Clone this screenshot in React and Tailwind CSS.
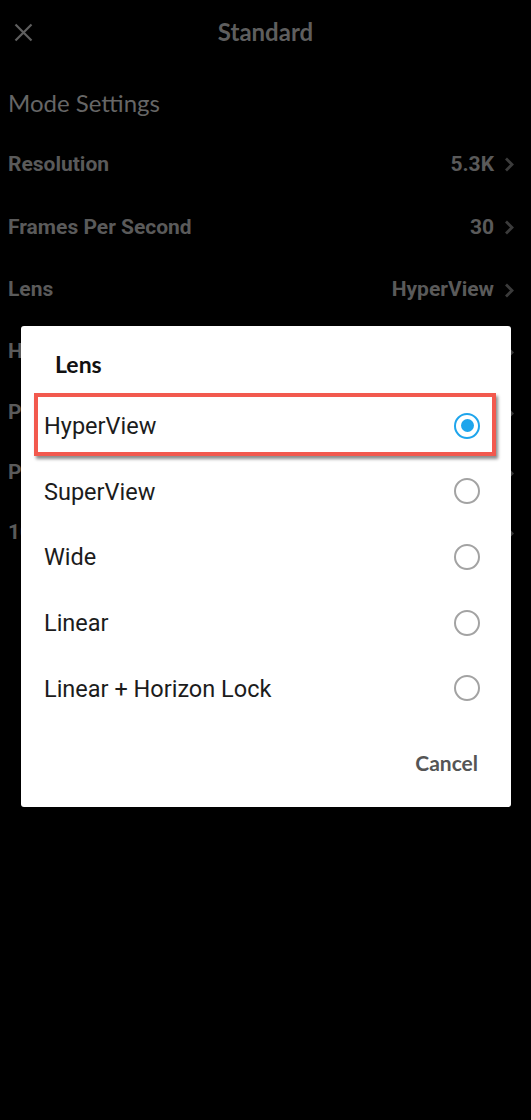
import React from 'react';

const settings = [
  { label: 'Resolution', value: '5.3K', h: 'h-[63px]' },
  { label: 'Frames Per Second', value: '30', h: 'h-[63px]' },
  { label: 'Lens', value: 'HyperView', h: 'h-[62px]' },
  { label: 'HyperSmooth', value: 'On', h: 'h-[62px]' },
  { label: 'Protune', value: 'Off', h: 'h-[60px]' },
  { label: 'Photo Timer', value: 'Off', h: 'h-[60px]' },
  { label: '10-bit Color', value: 'Off', h: 'h-[60px]' },
];

const lenses = ['HyperView', 'SuperView', 'Wide', 'Linear', 'Linear + Horizon Lock'];

function Chevron() {
  return (
    <svg width="11" height="15" viewBox="0 0 11 15" fill="none" stroke="#3b3b3b" strokeWidth="2.8">
      <path d="M2 1.5l6 6-6 6" />
    </svg>
  );
}

function Radio({ checked }) {
  if (checked) {
    return (
      <div className="w-[26px] h-[26px] rounded-full border-[2.5px] border-[#1ea5ec] flex items-center justify-center">
        <div className="w-[13px] h-[13px] rounded-full bg-[#1ea5ec]" />
      </div>
    );
  }
  return <div className="w-[26px] h-[26px] rounded-full border-2 border-[#a3a3a3]" />;
}

export default function App() {
  return (
    <div className="relative w-[531px] h-[1120px] bg-black overflow-hidden font-['Roboto',sans-serif]">
      {/* header */}
      <div className="relative h-16 flex items-center justify-center">
        <svg className="absolute left-[14px] top-[23px]" width="19" height="19" viewBox="0 0 19 19" stroke="#5f5f5f" strokeWidth="2.2">
          <path d="M1.5 1.5l16 16M17.5 1.5l-16 16" />
        </svg>
        <span className="font-['Lato',sans-serif] font-bold text-[24px] text-[#5e5e5e] -mt-[1px]">Standard</span>
      </div>

      <div className="pl-2 pt-[25px] pb-[16px] leading-[28px] text-[24px] text-[#666] font-['Lato',sans-serif]">
        Mode Settings
      </div>

      <div className="flex flex-col">
        {settings.map((s) => (
          <div key={s.label} className={`${s.h} flex items-center justify-between pl-2 pr-[16px]`}>
            <span className="font-bold text-[21px] text-[#5a5a5a]">{s.label}</span>
            <div className="flex items-center gap-[10px]">
              <span className="font-bold text-[21px] text-[#5a5a5a]">{s.value}</span>
              <Chevron />
            </div>
          </div>
        ))}
      </div>

      {/* lens dialog */}
      <div className="absolute left-[21px] top-[326px] w-[490px] h-[481px] bg-white rounded-[3px] flex flex-col">
        <div className="h-[67px] flex items-center pl-[34px] pt-[9px] font-['Lato',sans-serif] font-bold text-[23px] text-[#111]">
          Lens
        </div>
        {lenses.map((l, i) => (
          <div key={l} className="relative h-[65.6px] flex items-center justify-between pl-[23px] pr-[31px]">
            <span className="text-[23.5px] text-[#1c1c1c] mt-[2px]">{l}</span>
            <Radio checked={i === 0} />
            {i === 0 && (
              <div className="absolute left-[13px] top-0 w-[462px] h-[63px] border-[4.5px] border-[#f2594e] shadow-[2px_3px_3px_rgba(0,0,0,0.45)]" />
            )}
          </div>
        ))}
        <div className="flex-1 flex items-center justify-end pr-[33px] pb-[2px]">
          <span className="font-['Lato',sans-serif] font-bold text-[21px] text-[#555]">Cancel</span>
        </div>
      </div>
    </div>
  );
}
